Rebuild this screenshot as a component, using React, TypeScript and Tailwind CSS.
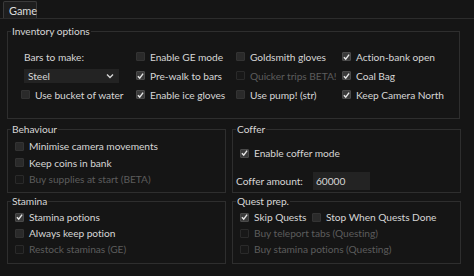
import React from "react";

const font = { fontFamily: 'Lato, "Open Sans", Arial, sans-serif' };

function Box({ checked, disabled }: { checked?: boolean; disabled?: boolean }) {
  return (
    <span
      className={
        "flex h-[9px] w-[9px] shrink-0 items-center justify-center rounded-[1px] border " +
        (disabled
          ? "border-[#2a2a2a] bg-[#181818]"
          : checked
          ? "border-[#4a4a4a] bg-[#3a3a3a]"
          : "border-[#333333] bg-[#2a2a2a]")
      }
    >
      {checked && (
        <svg width="8" height="8" viewBox="0 0 8 8">
          <path d="M1 4.2 L3.1 6.4 L7 1.2" stroke="#e6e6e6" strokeWidth="1.6" fill="none" />
        </svg>
      )}
    </span>
  );
}

function Check({
  label,
  checked,
  disabled,
}: {
  label: string;
  checked?: boolean;
  disabled?: boolean;
}) {
  return (
    <div className="flex h-full items-center gap-[5px] whitespace-nowrap">
      <Box checked={checked} disabled={disabled} />
      <span className={disabled ? "text-[#5c5c5c]" : "text-[#d6d6d6]"}>{label}</span>
    </div>
  );
}

function Group({
  title,
  className,
  children,
}: {
  title: string;
  className?: string;
  children: React.ReactNode;
}) {
  return (
    <fieldset className={"m-0 min-w-0 border border-[#2e2e2e] p-0 " + (className ?? "")}>
      <legend className="ml-[3px] px-[1px] text-[10.2px] leading-[14px] text-[#d6d6d6]">{title}</legend>
      {children}
    </fieldset>
  );
}

export default function App() {
  return (
    <div
      className="h-[276px] w-[474px] overflow-hidden bg-[#151515] text-[10.2px] leading-[14px] tracking-[-0.05px] text-[#d6d6d6]"
      style={font}
    >
      {/* tab strip */}
      <div className="flex h-[19px] items-end border-b border-[#2c2c2c] pl-[3px]">
        <div className="flex h-[17px] w-[34px] items-center rounded-t-[2px] border border-b-0 border-[#3a3a3a] bg-[#1e1e1e] pl-[5px] pt-[1px] text-[11px] text-[#dcdcdc]">
          Game
        </div>
      </div>

      <div className="flex flex-col pl-[7px] pr-[14px] pt-[5px]">
        <Group title="Inventory options" className="h-[95px]">
          <div className="grid grid-cols-[115px_100px_106px_auto] grid-rows-[19px_19px_19px] pl-[13px] pt-[9px]">
            <div className="flex items-center pl-[3px]">Bars to make:</div>
            <Check label="Enable GE mode" />
            <Check label="Goldsmith gloves" />
            <Check label="Action-bank open" checked />

            <div className="flex items-center pl-[3px]">
              <div className="flex h-[14px] w-[95px] items-center justify-between bg-[#232323] pl-[4px] pr-[5px]">
                <span>Steel</span>
                <svg width="8" height="6" viewBox="0 0 8 6">
                  <path d="M1 1.5 L4 4.5 L7 1.5" stroke="#d6d6d6" strokeWidth="1.4" fill="none" />
                </svg>
              </div>
            </div>
            <Check label="Pre-walk to bars" checked />
            <Check label="Quicker trips BETA!" disabled />
            <Check label="Coal Bag" checked />

            <Check label="Use bucket of water" />
            <Check label="Enable ice gloves" checked />
            <Check label="Use pump! (str)" />
            <Check label="Keep Camera North" checked />
          </div>
        </Group>

        <div className="mt-[3px] grid grid-cols-[219px_229px] gap-x-[6px] gap-y-[1px]">
          <Group title="Behaviour" className="h-[71px]">
            <div className="grid grid-rows-[16.5px_16.5px_16.5px] pl-[7px] pt-[2px]">
              <Check label="Minimise camera movements" />
              <Check label="Keep coins in bank" />
              <Check label="Buy supplies at start (BETA)" disabled />
            </div>
          </Group>
          <Group title="Coffer" className="h-[71px]">
            <div className="flex flex-col pt-[8px]">
              <div className="h-[18px] pl-[7px]">
                <Check label="Enable coffer mode" checked />
              </div>
              <div className="mt-[10px] flex h-[18px] items-center pl-[3px]">
                <span className="w-[77px]">Coffer amount:</span>
                <div className="flex h-[18px] w-[57px] items-center bg-[#232323] pl-[3px]">60000</div>
              </div>
            </div>
          </Group>

          <Group title="Stamina" className="h-[70px]">
            <div className="grid grid-rows-[16px_16px_16px] pl-[7px] pt-[1px]">
              <Check label="Stamina potions" checked />
              <Check label="Always keep potion" />
              <Check label="Restock staminas (GE)" disabled />
            </div>
          </Group>
          <Group title="Quest prep." className="h-[70px]">
            <div className="grid grid-rows-[16px_16px_16px] pl-[7px] pt-[1px]">
              <div className="flex">
                <div className="w-[72px]">
                  <Check label="Skip Quests" checked />
                </div>
                <Check label="Stop When Quests Done" />
              </div>
              <Check label="Buy teleport tabs (Questing)" disabled />
              <Check label="Buy stamina potions (Questing)" disabled />
            </div>
          </Group>
        </div>
      </div>
    </div>
  );
}
